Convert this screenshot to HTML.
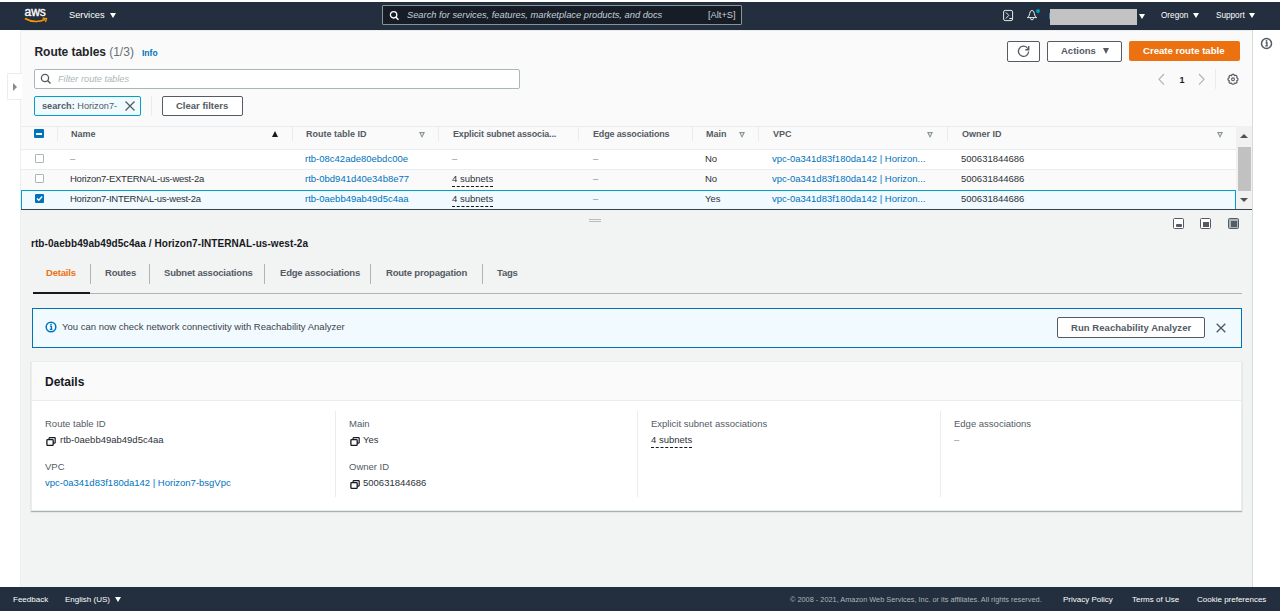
<!DOCTYPE html>
<html><head><meta charset="utf-8">
<style>
*{box-sizing:border-box;margin:0;padding:0}
html,body{width:1280px;height:611px;overflow:hidden;background:#fff;font-family:"Liberation Sans",sans-serif;color:#16191f;position:relative}
.a{position:absolute;white-space:nowrap;line-height:1}
.b{position:absolute}
.th{font-size:9px;font-weight:700;color:#545b64;margin-top:1px}
.td{font-size:9.5px;color:#2d3238}
.lnk{color:#0073bb}
.dash{color:#879596}
.hdiv{position:absolute;top:127px;width:1px;height:14px;background:#eaeded}
.filt{position:absolute;top:131.5px;width:0;height:0;border-left:3px solid transparent;border-right:3px solid transparent;border-top:6px solid #879596}
.filt:after{content:"";position:absolute;left:-1.5px;top:-5px;border-left:1.5px solid transparent;border-right:1.5px solid transparent;border-top:3px solid #fafafa}
.cb{position:absolute;width:9px;height:9px;border:1px solid #aab7b8;background:#fff;border-radius:1px}
.tabdiv{position:absolute;top:264px;width:1px;height:20px;background:#aab7b8}
.tab{margin-top:-1px;font-size:9.5px;font-weight:700;color:#545b64;letter-spacing:-0.2px}
.lbl{font-size:9.5px;color:#545b64}
.val{font-size:9.5px;color:#2d3238}
.val.lnk{color:#0073bb}
.val.dash{color:#879596}
.cdiv{position:absolute;top:411px;width:1px;height:86px;background:#eaeded}
.copy{position:absolute;width:10px;height:9px}
.ul{border-bottom:1px dashed #16191f;padding-bottom:1.5px}
</style></head><body>

<!-- NAVBAR -->
<div class="b" style="left:0;top:2px;width:1280px;height:28px;background:#232f3e"></div>
<div class="a" style="left:24.5px;top:6px;font-size:12px;font-weight:400;color:#fff;letter-spacing:0px;-webkit-text-stroke:0.35px #fff">aws</div>
<svg class="b" style="left:24px;top:16.5px" width="24" height="7" viewBox="0 0 24 7"><path d="M1 1.5 Q11 7 21 2.5" stroke="#f90" stroke-width="1.6" fill="none"/><path d="M18.5 1.2 L22.5 1.5 L21.5 5" stroke="#f90" stroke-width="1.3" fill="none"/></svg>
<div class="a" style="left:69px;top:10.5px;font-size:9.3px;color:#fff">Services</div>
<div class="b" style="left:110px;top:12.5px;border-left:3.5px solid transparent;border-right:3.5px solid transparent;border-top:5.5px solid #fff"></div>

<div class="b" style="left:382px;top:5px;width:360px;height:20px;background:#161d26;border:1px solid #879596;border-radius:1px"></div>
<svg class="b" style="left:389px;top:10px" width="11" height="11" viewBox="0 0 11 11"><circle cx="4.6" cy="4.8" r="3.2" stroke="#fff" stroke-width="1.3" fill="none"/><path d="M7 7.2 L9.5 9.7" stroke="#fff" stroke-width="1.5"/></svg>
<div class="a" style="left:407px;top:10.8px;font-size:9.3px;font-style:italic;color:#c6cfd6">Search for services, features, marketplace products, and docs</div>
<div class="a" style="left:708px;top:10.8px;font-size:9.3px;color:#c6cfd6">[Alt+S]</div>

<svg class="b" style="left:998px;top:6px" width="48" height="20" viewBox="998 6 48 20"><rect x="1003.6" y="10.4" width="9" height="10.2" rx="1.6" stroke="#e6e9eb" stroke-width="1" fill="none"/><path d="M1005.8 12.3 L1008.8 15.4 L1005.8 18.5" stroke="#e6e9eb" stroke-width="1" fill="none"/><path d="M1009.3 18.5 H1012" stroke="#e6e9eb" stroke-width="1"/><path d="M1027.3 17.6 Q1029.3 16.8 1029.6 13.8 Q1030 10.4 1032 10.4 Q1034 10.4 1034.4 13.8 Q1034.7 16.8 1036.7 17.6 Z" stroke="#e6e9eb" stroke-width="1" fill="none" stroke-linejoin="round"/><path d="M1030.5 18.2 A1.5 1.6 0 0 0 1033.5 18.2" stroke="#e6e9eb" stroke-width="1" fill="none"/><circle cx="1038" cy="11.1" r="2.3" fill="#00a1c9" stroke="#232f3e" stroke-width="0.7"/></svg>
<div class="b" style="left:1049px;top:13px;width:2px;height:6px;background:#2a7ac0"></div>
<div class="b" style="left:1050px;top:9px;width:87px;height:16px;background:#c3c3c3"></div>
<div class="b" style="left:1139px;top:13.5px;border-left:3px solid transparent;border-right:3px solid transparent;border-top:5px solid #fff"></div>
<div class="a" style="left:1161px;top:12px;font-size:8.2px;color:#fff">Oregon</div>
<div class="b" style="left:1193px;top:13px;border-left:3px solid transparent;border-right:3px solid transparent;border-top:5px solid #fff"></div>
<div class="a" style="left:1216px;top:12px;font-size:8.2px;color:#fff">Support</div>
<div class="b" style="left:1249px;top:13px;border-left:3px solid transparent;border-right:3px solid transparent;border-top:5px solid #fff"></div>

<!-- MAIN PANEL -->
<div class="b" style="left:21px;top:30px;width:1232px;height:557px;background:#f2f3f3;border-right:1px solid #d5dbdb"></div>
<div class="b" style="left:21px;top:30px;width:1231px;height:180px;background:#fafafa;border-top:1px solid #eaeded"></div>
<div class="b" style="left:20px;top:31px;width:1px;height:556px;background:#eeeeee"></div>
<!-- left toggle -->
<div class="b" style="left:7px;top:73px;width:15px;height:27px;background:#fff;border:1px solid #ececec;border-right:none;border-radius:2px 0 0 2px"></div>
<div class="b" style="left:13px;top:83px;border-top:4px solid transparent;border-bottom:4px solid transparent;border-left:4px solid #8a8a8a"></div>
<!-- right info -->
<svg class="b" style="left:1260px;top:37px" width="13" height="13" viewBox="0 0 13 13"><circle cx="6.5" cy="6.5" r="5.0" stroke="#545b64" stroke-width="1.5" fill="none"/><circle cx="6.5" cy="3.9" r="0.9" fill="#545b64"/><path d="M5.6 5.7 H6.9 V8.7 M5.2 8.9 H7.9" stroke="#545b64" stroke-width="1.4" fill="none"/></svg>

<!-- header -->
<div class="a" style="left:34.5px;top:45.5px;font-size:12px;font-weight:700;color:#1f252b;letter-spacing:-0.05px">Route tables <span style="font-weight:400;color:#687078;letter-spacing:0">(1/3)</span></div>
<div class="a" style="left:142px;top:48.5px;font-size:8.5px;font-weight:700;color:#0073bb">Info</div>

<div class="btn b" style="left:1007px;top:41px;width:33px;height:21px;border:1px solid #545b64;border-radius:2px;background:#fff"></div>
<svg class="b" style="left:1008px;top:40px" width="32" height="22" viewBox="0 0 32 22"><path d="M19.3 7.9 A5.1 5.1 0 1 0 20.6 11.4" stroke="#545b64" stroke-width="1.3" fill="none"/><path d="M17.3 9.7 H20.7 V6.1" stroke="#545b64" stroke-width="1.4" fill="none"/><path d="M18 9.7 L20.7 9.7 L20.7 7 Z" fill="#545b64"/></svg>
<div class="btn b" style="left:1047px;top:41px;width:75px;height:21px;border:1px solid #545b64;border-radius:2px;background:#fff"></div>
<div class="a" style="left:1061px;top:46px;font-size:9.5px;font-weight:700;color:#545b64;letter-spacing:0">Actions</div>
<div class="b" style="left:1103px;top:48px;border-left:3.2px solid transparent;border-right:3.2px solid transparent;border-top:6px solid #545b64"></div>
<div class="b" style="left:1129px;top:41px;width:111px;height:20px;background:#ec7211;border-radius:2px"></div>
<div class="a" style="left:1143px;top:45.5px;font-size:9.6px;font-weight:700;color:#fff">Create route table</div>

<div class="b" style="left:34px;top:69px;width:486px;height:20px;background:#fff;border:1px solid #aab7b8;border-radius:2px"></div>
<svg class="b" style="left:40px;top:73px" width="12" height="12" viewBox="0 0 12 12"><circle cx="5" cy="5" r="3.6" stroke="#545b64" stroke-width="1.3" fill="none"/><path d="M7.6 7.6 L10.5 10.5" stroke="#545b64" stroke-width="1.4"/></svg>
<div class="a" style="left:58px;top:75px;font-size:9.2px;font-style:italic;color:#aab7b8">Filter route tables</div>

<svg class="b" style="left:1157px;top:73px" width="9" height="13" viewBox="0 0 9 13"><path d="M7 1 L2 6.3 L7 11.6" stroke="#aab7b8" stroke-width="1.2" fill="none"/></svg>
<div class="a" style="left:1179.5px;top:75.5px;font-size:9px;font-weight:700;color:#16191f">1</div>
<svg class="b" style="left:1197px;top:73px" width="9" height="13" viewBox="0 0 9 13"><path d="M2 1 L7 6.3 L2 11.6" stroke="#aab7b8" stroke-width="1.2" fill="none"/></svg>
<div class="b" style="left:1215px;top:69px;width:1px;height:20px;background:#eaeded"></div>
<svg class="b" style="left:1226px;top:72px" width="14" height="14" viewBox="0 0 14 14"><path d="M5.47 3.60 L6.22 2.36 L7.78 2.36 L8.53 3.60 L9.94 3.25 L11.05 4.36 L10.70 5.77 L11.94 6.52 L11.94 8.08 L10.70 8.83 L11.05 10.24 L9.94 11.35 L8.53 11.00 L7.78 12.24 L6.22 12.24 L5.47 11.00 L4.06 11.35 L2.95 10.24 L3.30 8.83 L2.06 8.08 L2.06 6.52 L3.30 5.77 L2.95 4.36 L4.06 3.25 Z" stroke="#545b64" stroke-width="1.15" fill="none" stroke-linejoin="round"/><circle cx="7" cy="7.3" r="1.4" stroke="#545b64" stroke-width="1.1" fill="none"/></svg>

<div class="b" style="left:34px;top:96px;width:107px;height:20px;background:#f1faff;border:1px solid #00a1c9;border-radius:2px"></div>
<div class="a" style="left:42px;top:102px;font-size:9.2px;color:#545b64"><b style="color:#545b64">search:</b> Horizon7-</div>
<svg class="b" style="left:124px;top:100px" width="12" height="12" viewBox="0 0 12 12"><path d="M1.5 1.5 L10.5 10.5 M10.5 1.5 L1.5 10.5" stroke="#545b64" stroke-width="1.3"/></svg>
<div class="b" style="left:151px;top:96px;width:1px;height:20px;background:#eaeded"></div>
<div class="btn b" style="left:162px;top:96px;width:81px;height:20px;border:1px solid #545b64;border-radius:2px;background:#fff"></div>
<div class="a" style="left:176px;top:101px;font-size:9.5px;font-weight:700;color:#545b64">Clear filters</div>

<!-- TABLE -->
<div class="b" style="left:21px;top:126px;width:1215px;height:24px;background:#fafafa;border-top:1px solid #eaeded;border-bottom:1px solid #eaeded"></div>
<div class="b" style="left:21px;top:150px;width:1215px;height:20px;background:#fff;border-bottom:1px solid #eaeded"></div>
<div class="b" style="left:21px;top:170px;width:1215px;height:20px;background:#fafafa"></div>
<div class="b" style="left:21px;top:190px;width:1215px;height:20px;background:#f1faff;border:1px solid #00a1c9"></div>

<!-- header row -->
<div class="b" style="left:34px;top:129px;width:10px;height:9px;background:#0073bb;border-radius:1px"></div>
<div class="b" style="left:36px;top:133px;width:6px;height:1.5px;background:#fff"></div>
<div class="hdiv" style="left:57px"></div>
<div class="a th" style="left:71px;top:129px">Name</div>
<div class="b" style="left:272px;top:131px;border-left:3.5px solid transparent;border-right:3.5px solid transparent;border-bottom:6px solid #16191f"></div>
<div class="hdiv" style="left:292px"></div>
<div class="a th" style="left:306px;top:129px">Route table ID</div>
<div class="filt" style="left:419px"></div>
<div class="hdiv" style="left:438px"></div>
<div class="a th" style="left:453px;top:129px;letter-spacing:-0.15px">Explicit subnet associa...</div>
<div class="hdiv" style="left:578px"></div>
<div class="a th" style="left:593px;top:129px;letter-spacing:-0.15px">Edge associations</div>
<div class="hdiv" style="left:692px"></div>
<div class="a th" style="left:706px;top:129px">Main</div>
<div class="filt" style="left:739px"></div>
<div class="hdiv" style="left:758px"></div>
<div class="a th" style="left:773px;top:129px">VPC</div>
<div class="filt" style="left:927px"></div>
<div class="hdiv" style="left:947px"></div>
<div class="a th" style="left:962px;top:129px">Owner ID</div>
<div class="filt" style="left:1217px"></div>

<!-- rows -->
<div class="cb" style="left:35px;top:154px"></div>
<div class="a td dash" style="left:70px;top:154px">–</div>
<div class="a td lnk" style="left:305px;top:154px">rtb-08c42ade80ebdc00e</div>
<div class="a td dash" style="left:452px;top:154px">–</div>
<div class="a td dash" style="left:593px;top:154px">–</div>
<div class="a td" style="left:705px;top:154px">No</div>
<div class="a td lnk" style="left:772px;top:154px">vpc-0a341d83f180da142 | Horizon...</div>
<div class="a td" style="left:961px;top:154px">500631844686</div>

<div class="cb" style="left:35px;top:174px"></div>
<div class="a td" style="left:70px;top:174px;letter-spacing:-0.25px">Horizon7-EXTERNAL-us-west-2a</div>
<div class="a td lnk" style="left:305px;top:174px">rtb-0bd941d40e34b8e77</div>
<div class="a td" style="left:452px;top:174px"><span class="ul">4 subnets</span></div>
<div class="a td dash" style="left:593px;top:174px">–</div>
<div class="a td" style="left:705px;top:174px">No</div>
<div class="a td lnk" style="left:772px;top:174px">vpc-0a341d83f180da142 | Horizon...</div>
<div class="a td" style="left:961px;top:174px">500631844686</div>

<div class="b" style="left:35px;top:194px;width:9px;height:9px;background:#0073bb;border-radius:1px"></div>
<svg class="b" style="left:35px;top:194px" width="9" height="9" viewBox="0 0 10 10"><path d="M2.2 5 L4.2 7 L8 2.8" stroke="#fff" stroke-width="1.5" fill="none"/></svg>
<div class="a td" style="left:70px;top:194px;letter-spacing:-0.25px">Horizon7-INTERNAL-us-west-2a</div>
<div class="a td lnk" style="left:305px;top:194px">rtb-0aebb49ab49d5c4aa</div>
<div class="a td" style="left:452px;top:194px"><span class="ul">4 subnets</span></div>
<div class="a td dash" style="left:593px;top:194px">–</div>
<div class="a td" style="left:705px;top:194px">Yes</div>
<div class="a td lnk" style="left:772px;top:194px">vpc-0a341d83f180da142 | Horizon...</div>
<div class="a td" style="left:961px;top:194px">500631844686</div>

<!-- scrollbar -->
<div class="b" style="left:1236px;top:126px;width:16px;height:84px;background:#f1f1f1"></div>
<div class="b" style="left:1238px;top:147px;width:13px;height:44px;background:#c1c1c1"></div>
<div class="b" style="left:1240px;top:134px;border-left:4px solid transparent;border-right:4px solid transparent;border-bottom:4px solid #505050"></div>
<div class="b" style="left:1240px;top:198px;border-left:4px solid transparent;border-right:4px solid transparent;border-top:4px solid #505050"></div>

<!-- SPLIT PANEL -->
<div class="b" style="left:21px;top:209px;width:1231px;height:1px;background:#37424d"></div>
<div class="b" style="left:21px;top:210px;width:1231px;height:377px;background:#f2f3f3"></div>
<div class="b" style="left:589px;top:219px;width:12px;height:1px;background:#bcbcbc"></div>
<div class="b" style="left:589px;top:221px;width:12px;height:1px;background:#bcbcbc"></div>

<div class="b" style="left:1173px;top:218px;width:11px;height:11px;border:1.5px solid #545b64;border-radius:1.5px;background:#fff"></div>
<div class="b" style="left:1175.5px;top:223.5px;width:6px;height:3px;background:#545b64;border-radius:1px"></div>
<div class="b" style="left:1200px;top:218px;width:11px;height:11px;border:1.5px solid #545b64;border-radius:1.5px;background:#fff"></div>
<div class="b" style="left:1202.5px;top:221.5px;width:6px;height:5px;background:#545b64"></div>
<div class="b" style="left:1228px;top:218px;width:11px;height:11px;border:1.5px solid #545b64;border-radius:1.5px;background:#aab7b8"></div>
<div class="b" style="left:1230.5px;top:220.5px;width:6px;height:6px;background:#545b64"></div>

<div class="a" style="left:31px;top:239px;font-size:10px;font-weight:700;color:#16191f;letter-spacing:0.07px">rtb-0aebb49ab49d5c4aa / Horizon7-INTERNAL-us-west-2a</div>

<div class="b" style="left:33px;top:293px;width:1209px;height:1px;background:#aab7b8"></div>
<div class="b" style="left:33px;top:292px;width:57px;height:2px;background:#16191f"></div>
<div class="a tab" style="left:46px;top:269px;color:#ec7211">Details</div>
<div class="tabdiv" style="left:90px"></div>
<div class="a tab" style="left:105px;top:269px">Routes</div>
<div class="tabdiv" style="left:149px"></div>
<div class="a tab" style="left:164px;top:269px">Subnet associations</div>
<div class="tabdiv" style="left:264px"></div>
<div class="a tab" style="left:280px;top:269px">Edge associations</div>
<div class="tabdiv" style="left:370px"></div>
<div class="a tab" style="left:386px;top:269px">Route propagation</div>
<div class="tabdiv" style="left:482px"></div>
<div class="a tab" style="left:497px;top:269px">Tags</div>

<!-- alert -->
<div class="b" style="left:32px;top:308px;width:1210px;height:40px;background:#f1faff;border:1px solid #0073bb"></div>
<svg class="b" style="left:45px;top:321px" width="12" height="12" viewBox="0 0 12 12"><circle cx="6" cy="6" r="4.8" stroke="#0073bb" stroke-width="1.5" fill="none"/><circle cx="6" cy="3.6" r="0.85" fill="#0073bb"/><path d="M5.1 5.3 H6.4 V8.2 M4.8 8.4 H7.4" stroke="#0073bb" stroke-width="1.3" fill="none"/></svg>
<div class="a" style="left:62px;top:322.3px;font-size:9.5px;color:#3e4349">You can now check network connectivity with Reachability Analyzer</div>
<div class="btn b" style="left:1057px;top:317px;width:148px;height:21px;border:1px solid #545b64;border-radius:2px;background:#fff"></div>
<div class="a" style="left:1071px;top:323px;font-size:9.5px;font-weight:700;color:#545b64;letter-spacing:0.05px">Run Reachability Analyzer</div>
<svg class="b" style="left:1215px;top:322px" width="12" height="12" viewBox="0 0 12 12"><path d="M1.7 1.7 L10.3 10.3 M10.3 1.7 L1.7 10.3" stroke="#545b64" stroke-width="1.4"/></svg>

<!-- details container -->
<div class="b" style="left:31px;top:361px;width:1211px;height:150px;background:#fff;border:1px solid #eaeded;box-shadow:0 1px 1px 0 rgba(0,28,36,.3)"></div>
<div class="b" style="left:32px;top:362px;width:1209px;height:39px;background:#fafafa;border-bottom:1px solid #eaeded"></div>
<div class="a" style="left:45px;top:376px;font-size:12px;font-weight:700;color:#16191f">Details</div>

<div class="cdiv" style="left:335px"></div>
<div class="cdiv" style="left:637px"></div>
<div class="cdiv" style="left:940px"></div>

<div class="a lbl" style="left:45px;top:419px">Route table ID</div>
<svg class="copy" style="left:45.5px;top:437px" viewBox="0 0 10 9"><rect x="0.9" y="2.6" width="6.3" height="5.8" rx="0.8" stroke="#16191f" stroke-width="1.3" fill="none"/><path d="M3.1 2.6 V1.2 Q3.1 0.7 3.6 0.7 H8.7 Q9.2 0.7 9.2 1.2 V5.6 Q9.2 6.1 8.7 6.1 H7.2" stroke="#16191f" stroke-width="1.2" fill="none"/></svg>
<div class="a val" style="left:60px;top:435px">rtb-0aebb49ab49d5c4aa</div>
<div class="a lbl" style="left:45px;top:462px">VPC</div>
<div class="a val lnk" style="left:45px;top:478px">vpc-0a341d83f180da142 | Horizon7-bsgVpc</div>

<div class="a lbl" style="left:349px;top:419px">Main</div>
<svg class="copy" style="left:349.5px;top:437px" viewBox="0 0 10 9"><rect x="0.9" y="2.6" width="6.3" height="5.8" rx="0.8" stroke="#16191f" stroke-width="1.3" fill="none"/><path d="M3.1 2.6 V1.2 Q3.1 0.7 3.6 0.7 H8.7 Q9.2 0.7 9.2 1.2 V5.6 Q9.2 6.1 8.7 6.1 H7.2" stroke="#16191f" stroke-width="1.2" fill="none"/></svg>
<div class="a val" style="left:363px;top:435px">Yes</div>
<div class="a lbl" style="left:349px;top:462px">Owner ID</div>
<svg class="copy" style="left:349.5px;top:480px" viewBox="0 0 10 9"><rect x="0.9" y="2.6" width="6.3" height="5.8" rx="0.8" stroke="#16191f" stroke-width="1.3" fill="none"/><path d="M3.1 2.6 V1.2 Q3.1 0.7 3.6 0.7 H8.7 Q9.2 0.7 9.2 1.2 V5.6 Q9.2 6.1 8.7 6.1 H7.2" stroke="#16191f" stroke-width="1.2" fill="none"/></svg>
<div class="a val" style="left:363px;top:478px">500631844686</div>

<div class="a lbl" style="left:651px;top:419px">Explicit subnet associations</div>
<div class="a val" style="left:651px;top:435px"><span class="ul">4 subnets</span></div>

<div class="a lbl" style="left:954px;top:419px">Edge associations</div>
<div class="a val dash" style="left:954px;top:435px">–</div>

<!-- FOOTER -->
<div class="b" style="left:0;top:587px;width:1280px;height:24px;background:#232f3e"></div>
<div class="a" style="left:13px;top:596px;font-size:8px;color:#fff">Feedback</div>
<div class="a" style="left:65px;top:596px;font-size:8px;color:#fff">English (US)</div>
<div class="b" style="left:115px;top:597px;border-left:3px solid transparent;border-right:3px solid transparent;border-top:5px solid #fff"></div>
<div class="a" style="left:790px;top:596px;font-size:7.35px;color:#aab7b8">© 2008 - 2021, Amazon Web Services, Inc. or its affiliates. All rights reserved.</div>
<div class="a" style="left:1063px;top:596px;font-size:8px;color:#fff">Privacy Policy</div>
<div class="a" style="left:1132px;top:596px;font-size:8px;color:#fff">Terms of Use</div>
<div class="a" style="left:1197px;top:596px;font-size:8px;color:#fff">Cookie preferences</div>

</body></html>
